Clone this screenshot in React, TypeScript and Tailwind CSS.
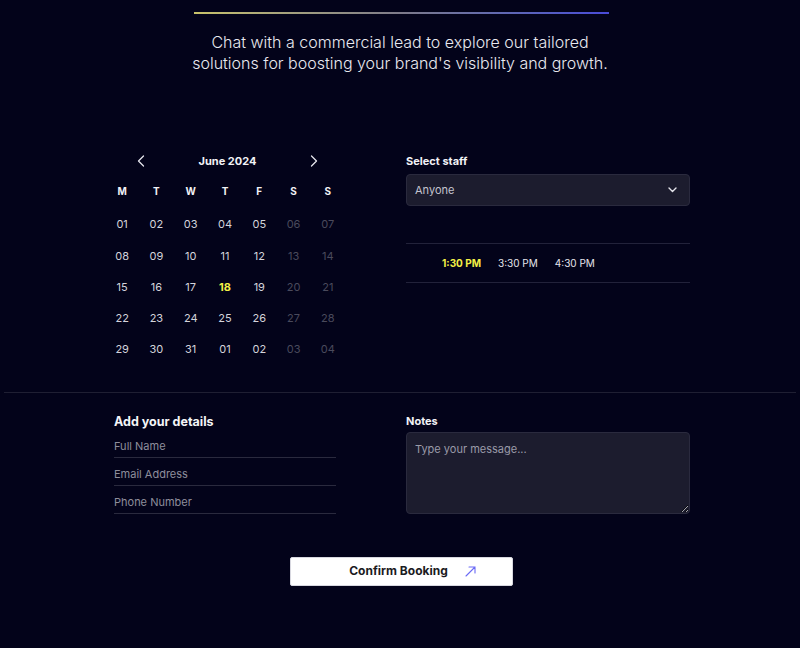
import React, { useState } from 'react';

const days: { d: string; muted?: boolean; active?: boolean }[] = [
  { d: '01' }, { d: '02' }, { d: '03' }, { d: '04' }, { d: '05' }, { d: '06', muted: true }, { d: '07', muted: true },
  { d: '08' }, { d: '09' }, { d: '10' }, { d: '11' }, { d: '12' }, { d: '13', muted: true }, { d: '14', muted: true },
  { d: '15' }, { d: '16' }, { d: '17' }, { d: '18', active: true }, { d: '19' }, { d: '20', muted: true }, { d: '21', muted: true },
  { d: '22' }, { d: '23' }, { d: '24' }, { d: '25' }, { d: '26' }, { d: '27', muted: true }, { d: '28', muted: true },
  { d: '29' }, { d: '30' }, { d: '31' }, { d: '01' }, { d: '02' }, { d: '03', muted: true }, { d: '04', muted: true },
];

const weekDays = ['M', 'T', 'W', 'T', 'F', 'S', 'S'];
const times = ['1:30 PM', '3:30 PM', '4:30 PM'];

const Chevron = ({ dir }: { dir: 'left' | 'right' }) => (
  <svg width="8" height="12" viewBox="0 0 8 12" fill="none">
    <path
      d={dir === 'left' ? 'M6.5 1L1.5 6l5 5' : 'M1.5 1l5 5-5 5'}
      stroke="#e5e5ec"
      strokeWidth="1.3"
      strokeLinecap="round"
      strokeLinejoin="round"
    />
  </svg>
);

const App = () => {
  const [time, setTime] = useState('1:30 PM');

  return (
    <div
      className="min-h-[648px] w-full bg-[#03031a] text-white overflow-hidden"
      style={{ fontFamily: 'Inter, "Liberation Sans", sans-serif' }}
    >
      {/* intro */}
      <div className="flex flex-col items-center pt-[12px]">
        <div className="h-[2px] w-[415px] ml-[3px] bg-gradient-to-r from-[#c9c36a] via-[#7d7a8a] to-[#4a4ad8]" />
        <p className="mt-[18px] text-center text-[16px] leading-[21px] text-[#e9e9f0] font-light">
          Chat with a commercial lead to explore our tailored
          <br />
          solutions for boosting your brand's visibility and growth.
        </p>
      </div>

      {/* calendar + staff */}
      <div className="mx-auto mt-[78px] w-[590px] grid grid-cols-[240px_284px] gap-x-[61px]">
        <div>
          <div className="flex items-center justify-between pl-[28px] pr-[23px] h-[18px]">
            <button className="p-1"><Chevron dir="left" /></button>
            <span className="text-[11px] font-bold text-[#f2f2f6]">June 2024</span>
            <button className="p-1"><Chevron dir="right" /></button>
          </div>
          <div className="grid grid-cols-7 mt-[13px]">
            {weekDays.map((w, i) => (
              <div key={i} className="h-[16px] flex items-center justify-center text-[10px] font-bold text-[#f2f2f6]">
                {w}
              </div>
            ))}
          </div>
          <div className="grid grid-cols-7 mt-[10px]">
            {days.map((x, i) => (
              <div
                key={i}
                className={
                  'h-[31.2px] flex items-center justify-center text-[11px] ' +
                  (x.active ? 'font-bold text-[#f4f046]' : x.muted ? 'text-[#4a4a5c]' : 'text-[#d4d4dc]')
                }
              >
                {x.d}
              </div>
            ))}
          </div>
        </div>

        <div>
          <div className="text-[11px] font-bold text-[#f2f2f6] h-[16px] leading-[16px] mt-[1px]">Select staff</div>
          <div className="mt-[5px] h-[32px] rounded-[4px] border border-[#2a2a3e] bg-[#1c1c2e] flex items-center justify-between pl-[8px] pr-[12px]">
            <span className="text-[11px] text-[#c4c4ce]">Anyone</span>
            <svg width="9" height="6" viewBox="0 0 9 6" fill="none">
              <path d="M1 1l3.5 3.5L8 1" stroke="#e5e5ec" strokeWidth="1.4" strokeLinecap="round" strokeLinejoin="round" />
            </svg>
          </div>
          <div className="mt-[37px] border-y border-[#22223a] h-[40px] flex items-center gap-[17px] pl-[36px]">
            {times.map((t) => (
              <button
                key={t}
                onClick={() => setTime(t)}
                className={'text-[10px] ' + (time === t ? 'font-bold text-[#f4f046]' : 'text-[#e5e5ec]')}
              >
                {t}
              </button>
            ))}
          </div>
        </div>
      </div>

      <div className="mx-[4px] mt-[27px] h-px bg-[#1f1f33]" />

      {/* details + notes */}
      <div className="mx-auto mt-[21px] w-[590px] grid grid-cols-[240px_284px] gap-x-[61px]">
        <div className="pl-[9px]">
          <div className="text-[12.5px] font-bold text-[#f5f5f8] h-[16px] leading-[16px]">Add your details</div>
          <div className="w-[222px] flex flex-col">
            {['Full Name', 'Email Address', 'Phone Number'].map((p) => (
              <input
                key={p}
                placeholder={p}
                className="h-[28px] pt-[5px] bg-transparent border-b border-[#2a2a3e] text-[11px] text-[#d4d4dc] placeholder:text-[#8e8e9c] outline-none"
              />
            ))}
          </div>
        </div>
        <div>
          <div className="text-[11px] font-bold text-[#f2f2f6] h-[16px] leading-[16px] -mt-[1px]">Notes</div>
          <textarea
            placeholder="Type your message..."
            className="mt-[3px] block w-full h-[82px] rounded-[4px] border border-[#2a2a3e] bg-[#1c1c2e] px-[8px] py-[8px] text-[11px] text-[#d4d4dc] placeholder:text-[#9a9aa8] outline-none"
          />
        </div>
      </div>

      <div className="flex justify-center mt-[43px] pl-[3px]">
        <button className="w-[223px] h-[29px] bg-white rounded-[2px] border border-[#d8d8e0] flex items-center justify-center gap-[17px] pl-[22px]">
          <span className="text-[12px] font-bold text-[#1b1b22]">Confirm Booking</span>
          <svg width="11" height="11" viewBox="0 0 11 11" fill="none">
            <path d="M1 10L10 1M4 1h6v6" stroke="#6a6af5" strokeWidth="1.1" strokeLinecap="round" />
          </svg>
        </button>
      </div>
    </div>
  );
};

export default App;
